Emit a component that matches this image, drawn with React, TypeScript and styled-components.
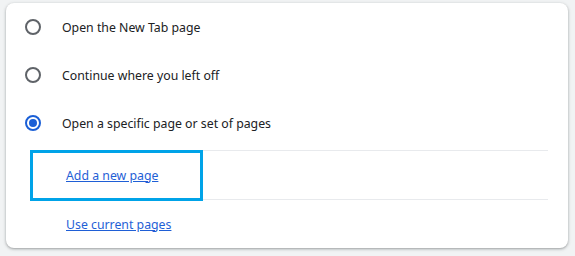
import React from 'react';
import styled, { createGlobalStyle } from 'styled-components';

const GlobalStyle = createGlobalStyle`
  html, body {
    margin: 0;
    padding: 0;
    background: #f1f3f4;
  }
  body {
    font-family: 'Noto Sans', 'Liberation Sans', sans-serif;
  }
`;

const Page = styled.div`
  padding: 3px 7px 8px 6px;
`;

const Card = styled.div`
  position: relative;
  background: #fff;
  border-radius: 8px;
  box-shadow: 0 1px 2px rgba(60, 64, 67, 0.3), 0 1px 3px 1px rgba(60, 64, 67, 0.15);
  height: 245px;
  box-sizing: border-box;
`;

const RadioRow = styled.label`
  display: flex;
  align-items: center;
  height: 48px;
  padding-left: 19px;
  gap: 21px;
  font-size: 12.3px;
  color: #202124;
  cursor: pointer;
`;

const RadioDot = styled.span<{ $checked?: boolean }>`
  width: 16px;
  height: 16px;
  box-sizing: border-box;
  border-radius: 50%;
  border: 2px solid ${({ $checked }) => ($checked ? '#1a5fd6' : '#5f6368')};
  display: flex;
  align-items: center;
  justify-content: center;

  &::after {
    content: '';
    display: ${({ $checked }) => ($checked ? 'block' : 'none')};
    width: 8px;
    height: 8px;
    border-radius: 50%;
    background: #1a5fd6;
  }
`;

const SubList = styled.div`
  margin: 3px 20px 0 24px;
`;

const LinkRow = styled.div`
  display: flex;
  align-items: center;
  height: 48px;
  border-top: 1px solid #e8eaed;
  padding-left: 36px;
`;

const LinkText = styled.a`
  font-size: 12.3px;
  color: #1f5fd6;
  text-decoration: underline;
  cursor: pointer;
`;

const Highlight = styled.div`
  position: absolute;
  left: 24px;
  top: 147px;
  width: 173px;
  height: 51px;
  box-sizing: border-box;
  border: 3px solid #00a3e8;
  pointer-events: none;
`;

const options = [
  { label: 'Open the New Tab page', checked: false },
  { label: 'Continue where you left off', checked: false },
  { label: 'Open a specific page or set of pages', checked: true },
];

export default function App() {
  return (
    <>
      <GlobalStyle />
      <Page>
        <Card>
          {options.map((o) => (
            <RadioRow key={o.label}>
              <RadioDot $checked={o.checked} />
              {o.label}
            </RadioRow>
          ))}
          <SubList>
            <LinkRow>
              <LinkText>Add a new page</LinkText>
            </LinkRow>
            <LinkRow>
              <LinkText>Use current pages</LinkText>
            </LinkRow>
          </SubList>
          <Highlight />
        </Card>
      </Page>
    </>
  );
}
